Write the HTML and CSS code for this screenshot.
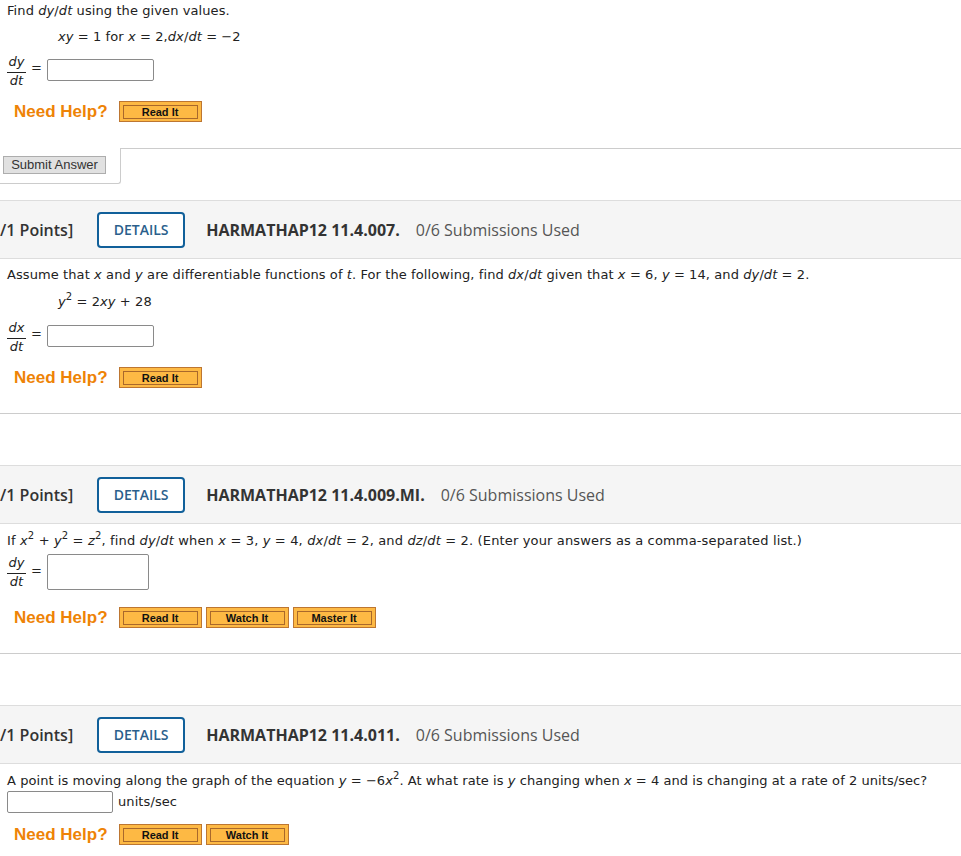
FILE: index.html
```html
<!DOCTYPE html>
<html>
<head>
<meta charset="utf-8">
<link rel="stylesheet" href="styles.css">
</head>
<body>
<div class="qbody qfirst">
  <p class="prompt">Find <i>dy</i>/<i>dt</i> using the given values.</p>
  <p class="eq"><i>xy</i> = 1 for <i>x</i> = 2,<i>dx</i>/<i>dt</i> = −2</p>
  <div class="ans">
    <span class="frac"><i class="num">dy</i><i class="den">dt</i></span>
    <span class="eqsign">=</span>
    <span class="inp"></span>
  </div>
  <div class="help">
    <span class="need">Need Help?</span>
    <button class="hbtn"><span>Read It</span></button>
  </div>
</div>
<div class="submit-row">
  <div class="submit-cell"><button class="submit">Submit Answer</button></div>
  <div class="submit-rest"></div>
</div>

<div class="qhead">
  <span class="pts">/1 Points]</span>
  <span class="details">DETAILS</span>
  <span class="qid">HARMATHAP12 11.4.007.</span>
  <span class="subs">0/6 Submissions Used</span>
</div>
<div class="qbody qsep q2">
  <p class="prompt">Assume that <i>x</i> and <i>y</i> are differentiable functions of <i>t</i>. For the following, find <i>dx</i>/<i>dt</i> given that <i>x</i> = 6, <i>y</i> = 14, and <i>dy</i>/<i>dt</i> = 2.</p>
  <p class="eq"><i>y</i><sup>2</sup> = 2<i>xy</i> + 28</p>
  <div class="ans">
    <span class="frac"><i class="num">dx</i><i class="den">dt</i></span>
    <span class="eqsign">=</span>
    <span class="inp"></span>
  </div>
  <div class="help">
    <span class="need">Need Help?</span>
    <button class="hbtn"><span>Read It</span></button>
  </div>
</div>

<div class="qhead">
  <span class="pts">/1 Points]</span>
  <span class="details">DETAILS</span>
  <span class="qid">HARMATHAP12 11.4.009.MI.</span>
  <span class="subs">0/6 Submissions Used</span>
</div>
<div class="qbody qsep q3">
  <p class="prompt">If <i>x</i><sup>2</sup> + <i>y</i><sup>2</sup> = <i>z</i><sup>2</sup>, find <i>dy</i>/<i>dt</i> when <i>x</i> = 3, <i>y</i> = 4, <i>dx</i>/<i>dt</i> = 2, and <i>dz</i>/<i>dt</i> = 2. (Enter your answers as a comma-separated list.)</p>
  <div class="ans">
    <span class="frac"><i class="num">dy</i><i class="den">dt</i></span>
    <span class="eqsign">=</span>
    <span class="inp inp-tall"></span>
  </div>
  <div class="help">
    <span class="need">Need Help?</span>
    <button class="hbtn"><span>Read It</span></button>
    <button class="hbtn"><span>Watch It</span></button>
    <button class="hbtn"><span>Master It</span></button>
  </div>
</div>

<div class="qhead">
  <span class="pts">/1 Points]</span>
  <span class="details">DETAILS</span>
  <span class="qid">HARMATHAP12 11.4.011.</span>
  <span class="subs">0/6 Submissions Used</span>
</div>
<div class="qbody q4">
  <p class="prompt">A point is moving along the graph of the equation <i>y</i> = −6<i>x</i><sup>2</sup>. At what rate is <i>y</i> changing when <i>x</i> = 4 and is changing at a rate of 2 units/sec?</p>
  <div class="units-row">
    <span class="inp inp-wide"></span>
    <span class="units">units/sec</span>
  </div>
  <div class="help">
    <span class="need">Need Help?</span>
    <button class="hbtn"><span>Read It</span></button>
    <button class="hbtn"><span>Watch It</span></button>
  </div>
</div>
</body>
</html>
```
FILE: styles.css
```css
html, body {
  margin: 0;
  padding: 0;
  background: #ffffff;
  overflow: hidden;
}
body {
  font-family: "DejaVu Sans", Verdana, sans-serif;
  font-size: 13px;
  letter-spacing: 0.09px;
  color: #222222;
  width: 961px;
}
i {
  font-style: italic;
}
sup {
  font-size: 10px;
  line-height: 0;
  vertical-align: 6px;
}
.qbody {
  padding: 8px 0 0 7px;
}
.qfirst {
  padding-top: 3px;
}
.q3, .q4 {
  padding-top: 9px;
}
.prompt {
  margin: 0;
  line-height: 16px;
}
.q3 .prompt {
  letter-spacing: 0.15px;
}
.q4 .prompt {
  letter-spacing: 0.06px;
}
.eq {
  margin: 10px 0 0 51px;
  line-height: 16px;
}
.q2 .eq {
  margin-top: 11px;
}
.ans {
  display: flex;
  align-items: flex-start;
  margin-top: 10px;
}
.qfirst .ans {
  margin-top: 9px;
}
.q3 .ans {
  margin-top: 5px;
}
.frac {
  display: inline-flex;
  flex-direction: column;
  align-items: center;
  width: 19px;
  line-height: 16px;
}
.q3 .frac {
  margin-top: 1px;
}
.frac .num {
  border-bottom: 1px solid #222;
  width: 19px;
  text-align: center;
  padding-bottom: 2px;
}
.eqsign {
  margin: 6px 5px 0 5px;
  line-height: 16px;
}
.q3 .eqsign {
  margin-top: 9px;
}
.inp {
  display: inline-block;
  box-sizing: border-box;
  width: 107px;
  height: 22px;
  margin-top: 5px;
  border: 1px solid #8a8a8a;
  border-radius: 2px;
  background: #fff;
}
.inp-tall {
  width: 102px;
  height: 36px;
  margin-top: 0;
}
.inp-wide {
  width: 106px;
  margin-top: 0;
}
.help {
  display: flex;
  align-items: center;
  margin-top: 12px;
  padding-left: 7px;
  gap: 4px;
}
.q3 .help {
  margin-top: 17px;
}
.need {
  font-family: "Liberation Sans", Arial, sans-serif;
  font-weight: bold;
  font-size: 17px;
  letter-spacing: 0;
  color: #ee8306;
  margin-right: 7px;
}
.hbtn {
  box-sizing: border-box;
  width: 83px;
  height: 21px;
  margin: 0;
  padding: 3px 3px 2px 3px;
  border: 1px solid #bd7631;
  background: #fdb944;
  border-radius: 0;
  cursor: pointer;
}
.hbtn span {
  display: block;
  box-sizing: border-box;
  height: 14px;
  border: 1px solid #a9682b;
  font-family: "Liberation Sans", Arial, sans-serif;
  font-weight: bold;
  font-size: 11px;
  letter-spacing: 0;
  line-height: 12px;
  color: #111;
  text-align: center;
}
.submit-row {
  display: flex;
  margin-top: 26px;
  height: 36px;
}
.submit-cell {
  box-sizing: border-box;
  width: 121px;
  border-right: 1px solid #cccccc;
  border-bottom: 1px solid #cccccc;
  border-bottom-right-radius: 3px;
  padding: 8px 0 0 3px;
}
.submit-rest {
  flex: 1;
  border-top: 1px solid #cccccc;
}
.submit {
  box-sizing: border-box;
  width: 103px;
  height: 18px;
  margin: 0;
  padding: 0;
  border: 1px solid #adadad;
  background: #e1e1e1;
  font-family: "Liberation Sans", Arial, sans-serif;
  font-size: 13px;
  letter-spacing: 0;
  line-height: 16px;
  color: #333;
  border-radius: 0;
}
.qhead {
  box-sizing: border-box;
  height: 59px;
  margin-top: 16px;
  display: flex;
  align-items: center;
  background: #f5f5f5;
  border-top: 1px solid #dddddd;
  border-bottom: 1px solid #dddddd;
  font-family: "Open Sans", sans-serif;
  font-size: 16px;
  letter-spacing: 0;
  color: #333333;
}
.qsep {
  padding-bottom: 25px;
  border-bottom: 1px solid #cccccc;
}
.qsep + .qhead {
  margin-top: 51px;
}
.pts {
  font-weight: 600;
  margin-left: 0;
  margin-right: 24px;
}
.details {
  box-sizing: border-box;
  width: 88px;
  height: 36px;
  display: flex;
  align-items: center;
  justify-content: center;
  border: 2px solid #11609a;
  border-radius: 4px;
  background: #ffffff;
  font-size: 14px;
  font-weight: 600;
  color: #2b5f8c;
  margin-right: 21px;
}
.qid {
  font-weight: 700;
  margin-right: 16px;
}
.subs {
  color: #555555;
}
.units-row {
  display: flex;
  align-items: center;
  margin-top: 2px;
}
.units {
  margin-left: 5px;
  line-height: 16px;
}
.q4 .help {
  margin-top: 11px;
}
```
